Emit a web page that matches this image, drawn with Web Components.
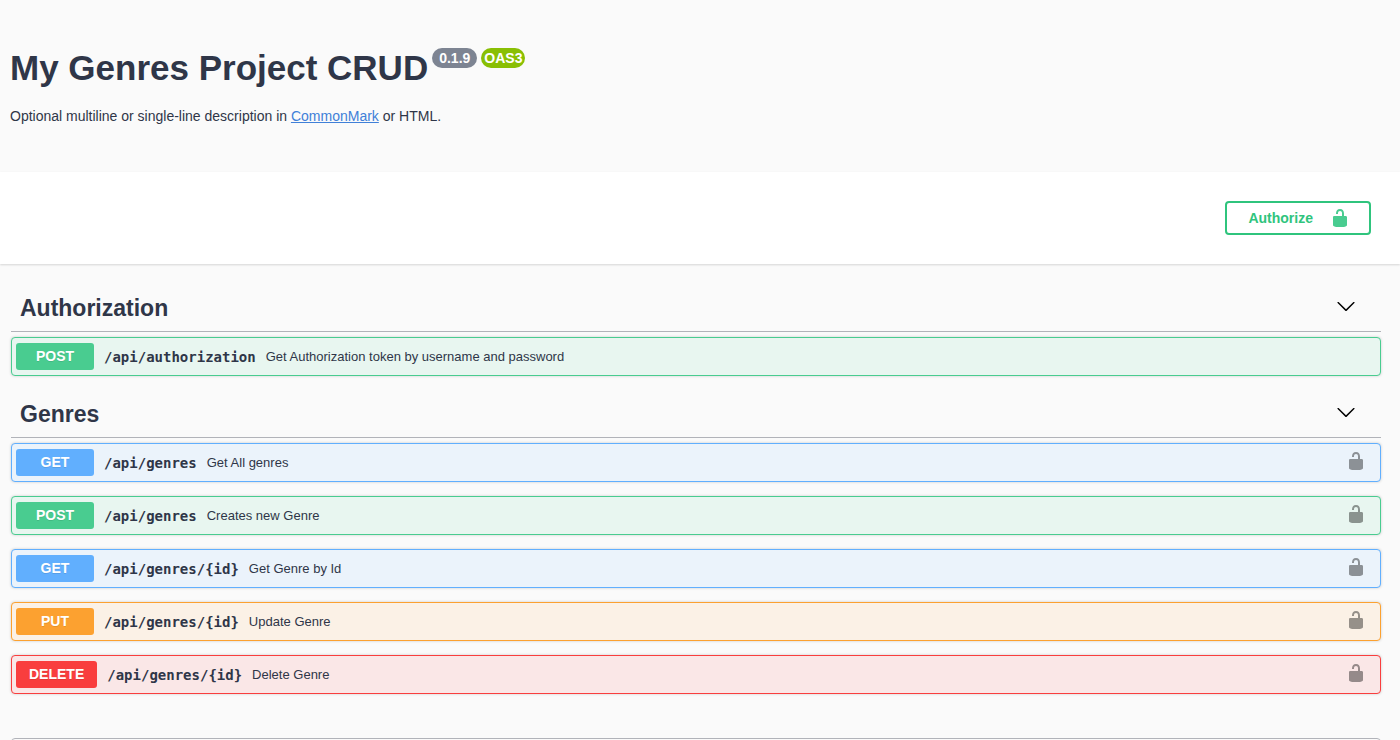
<!DOCTYPE html>
<html lang="en">
<head>
<meta charset="utf-8">
<meta name="viewport" content="width=device-width, initial-scale=1">
<title>My Genres Project CRUD</title>
<style>
  body { margin: 0; background: #fafafa; color: #2f3648; font-family: "Liberation Sans", Arial, sans-serif; }
</style>
</head>
<body>
<api-info name="My Genres Project CRUD" version="0.1.9" spec="OAS3">
  Optional multiline or single-line description in <a href="#commonmark">CommonMark</a> or HTML.
</api-info>
<api-schemes></api-schemes>
<main>
  <api-list>
    <api-tag name="Authorization">
      <api-operation method="post" path="/api/authorization">Get Authorization token by username and password</api-operation>
    </api-tag>
    <api-tag name="Genres">
      <api-operation method="get" path="/api/genres" locked>Get All genres</api-operation>
      <api-operation method="post" path="/api/genres" locked>Creates new Genre</api-operation>
      <api-operation method="get" path="/api/genres/{id}" locked>Get Genre by Id</api-operation>
      <api-operation method="put" path="/api/genres/{id}" locked>Update Genre</api-operation>
      <api-operation method="delete" path="/api/genres/{id}" locked>Delete Genre</api-operation>
    </api-tag>
    <api-models></api-models>
  </api-list>
</main>
<script>
const define = (name, html, setup) => customElements.define(name, class extends HTMLElement {
  constructor() {
    super();
    this.attachShadow({ mode: "open" }).innerHTML = html;
  }
  connectedCallback() { if (setup) setup(this, this.shadowRoot); }
});

define("lock-icon", `
<style>:host { display: block; width: 20px; height: 20px; flex: none } svg { display: block; fill: currentColor }</style>
<svg width="20" height="20" viewBox="0 0 20 20" aria-hidden="true"><path d="M15.8 8H14V5.6C14 2.703 12.665 1 10 1 7.334 1 6 2.703 6 5.6V6h2v-.801C8 3.754 8.797 3 10 3c1.203 0 2 .754 2 2.199V8H4c-.553 0-1 .646-1 1.199V17c0 .549.428 1.139.951 1.307l1.197.387C5.672 18.861 6.55 19 7.1 19h5.8c.549 0 1.428-.139 1.951-.307l1.196-.387c.524-.167.953-.757.953-1.306V9.199C17 8.646 16.352 8 15.8 8z"/></svg>`);

define("api-info", `
<style>
  :host { display: block; padding: 46px 10px 46px }
  header { display: flex; align-items: flex-start; gap: 4px }
  h1 { margin: 0; font-size: 35px; line-height: 44px }
  .badge { margin-top: 2px; padding: 0 7px; border-radius: 10px; background: #7d8492; color: #fff; font-size: 14px; font-weight: 700; line-height: 20px }
  .spec { padding: 0 3px; background: #89bf04 }
  p { margin: 16px 0 0; font-size: 14px; line-height: 20px }
  ::slotted(a) { color: #4080d8 }
</style>
<header><h1></h1><span class="badge version"></span><span class="badge spec"></span></header>
<p><slot></slot></p>`, (el, root) => {
  root.querySelector("h1").textContent = el.getAttribute("name");
  root.querySelector(".version").textContent = el.getAttribute("version");
  root.querySelector(".spec").textContent = el.getAttribute("spec");
});

define("api-schemes", `
<style>
  :host { display: flex; justify-content: flex-end; padding: 29px 29px; background: #fff; box-shadow: 0 1px 2px rgba(0,0,0,.15) }
  button { display: flex; align-items: center; gap: 17px; height: 34px; padding: 0 19px 0 21px; border: 2px solid #2fc47d; border-radius: 4px; background: transparent; color: #2fc47d; font: 700 14px "Liberation Sans", Arial, sans-serif; cursor: pointer }
  lock-icon { color: #49cc90 }
</style>
<button type="button">Authorize<lock-icon></lock-icon></button>`);

define("api-list", `<style>:host { display: block; padding: 20px 19px 20px 11px }</style><slot></slot>`);

define("api-tag", `
<style>
  :host { display: block }
  header { display: flex; align-items: center; justify-content: space-between; height: 47px; padding: 0 25px 0 9px; margin-bottom: 5px; border-bottom: 1px solid #b1b3b9 }
  h2 { margin: 0; font-size: 23px; line-height: 28px }
  button { padding: 0 0 4px; border: 0; background: none; cursor: pointer }
  svg { display: block }
</style>
<section>
  <header><h2></h2><button type="button"><svg width="20" height="20" viewBox="0 0 20 20" aria-hidden="true"><path d="M17.418 6.109c.272-.268.709-.268.979 0s.271.701 0 .969l-7.908 7.83c-.27.268-.707.268-.979 0l-7.908-7.83c-.27-.268-.27-.701 0-.969.271-.268.709-.268.979 0L10 13.25l7.418-7.141z"/></svg></button></header>
  <slot></slot>
</section>`, (el, root) => {
  root.querySelector("h2").textContent = el.getAttribute("name");
  root.querySelector("button").setAttribute("aria-label", "Toggle " + el.getAttribute("name"));
});

define("api-operation", `
<style>
  :host { --tone: #49cc90; --wash: #e8f6f0; display: flex; align-items: center; gap: 10px; margin-bottom: 14px; padding: 5px 14px 5px 4px; border: 1px solid var(--tone); border-radius: 4px; background: var(--wash); box-shadow: 0 0 3px rgba(0,0,0,.19) }
  :host([method="get"]) { --tone: #61affe; --wash: #ebf3fb }
  :host([method="put"]) { --tone: #fca130; --wash: #fbf1e6 }
  :host([method="delete"]) { --tone: #f93e3e; --wash: #fae7e7 }
  .method { box-sizing: border-box; min-width: 78px; padding: 0 13px; border-radius: 3px; background: var(--tone); color: #fff; font-size: 14px; font-weight: 700; line-height: 27px; text-align: center; text-transform: uppercase; text-shadow: 0 1px 0 rgba(0,0,0,.1) }
  .path { padding-top: 1px; font: 700 14px/20px "DejaVu Sans Mono", monospace }
  .summary { flex: 1; font-size: 13px; line-height: 20px }
  .lock { padding: 0 0 4px; border: 0; background: none; color: #000; opacity: .4; cursor: pointer }
</style>
<span class="method"></span><span class="path"></span><span class="summary"><slot></slot></span>`, (el, root) => {
  root.querySelector(".method").textContent = el.getAttribute("method");
  root.querySelector(".path").textContent = el.getAttribute("path");
  if (el.hasAttribute("locked") && !root.querySelector(".lock"))
    root.querySelector(".summary").insertAdjacentHTML("afterend",
      '<button class="lock" type="button" aria-label="Authorization"><lock-icon></lock-icon></button>');
});

define("api-models", `<style>:host { display: block; height: 50px; margin-top: 44px; border: 1px solid #b1b3b9; border-radius: 4px }</style>`);
</script>
</body>
</html>
